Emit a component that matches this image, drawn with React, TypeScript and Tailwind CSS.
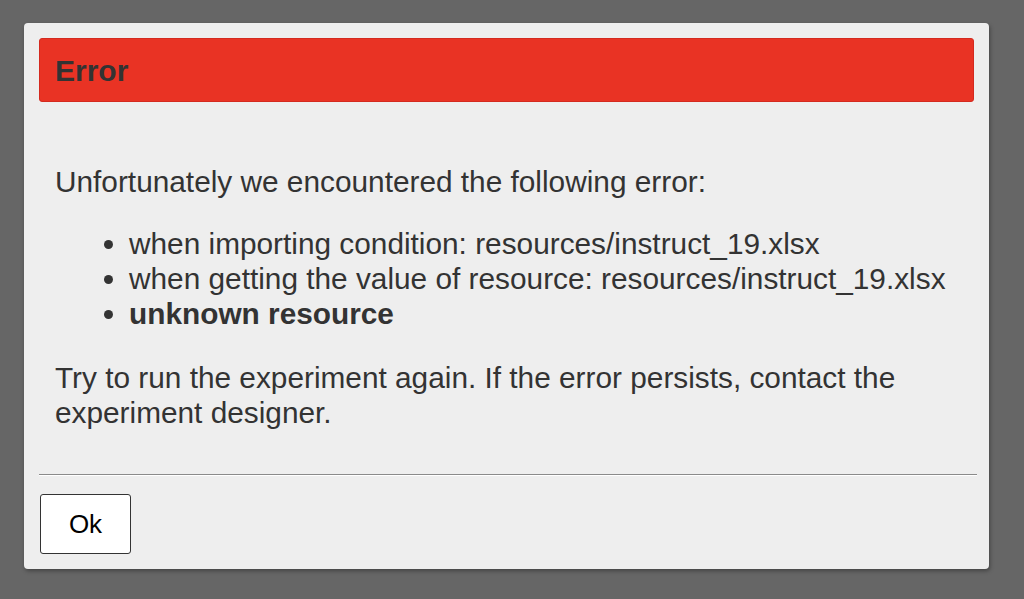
export default function App() {
  return (
    <div className="min-h-screen w-full bg-[#666666] pl-[24px] pt-[23px] font-['Liberation_Sans',Arial,sans-serif]">
      <div className="flex h-[546px] w-[965px] flex-col rounded-[4px] bg-[#eeeeee] shadow-[1px_2px_4px_rgba(0,0,0,0.35)]">
        <div className="mx-[15px] mt-[15px] flex h-[64px] items-center rounded-[3px] border border-[#d42a1f] bg-[#e93324] pl-[15px] pt-[2px]">
          <h1 className="text-[30px] font-bold leading-none text-[#333333]">Error</h1>
        </div>

        <div className="px-[31px] pt-[62px] text-[29.8px] leading-[35px] text-[#333333]">
          <p>Unfortunately we encountered the following error:</p>
          <ul className="mt-[27px] list-disc pl-[74px]">
            <li>when importing condition: resources/instruct_19.xlsx</li>
            <li>when getting the value of resource: resources/instruct_19.xlsx</li>
            <li className="font-bold">unknown resource</li>
          </ul>
          <p className="mt-[29px] pr-[40px]">
            Try to run the experiment again. If the error persists, contact the experiment designer.
          </p>
        </div>

        <div className="mt-auto pb-[15px] pl-[15px] pr-[12px]">
          <hr className="border-0 border-t border-b border-t-[#8a8a8a] border-b-white" />
          <button
            type="button"
            className="ml-[1px] mt-[18px] h-[60px] w-[91px] rounded-[3px] border border-[#333333] bg-white text-[26px] text-black"
          >
            Ok
          </button>
        </div>
      </div>
    </div>
  );
}
